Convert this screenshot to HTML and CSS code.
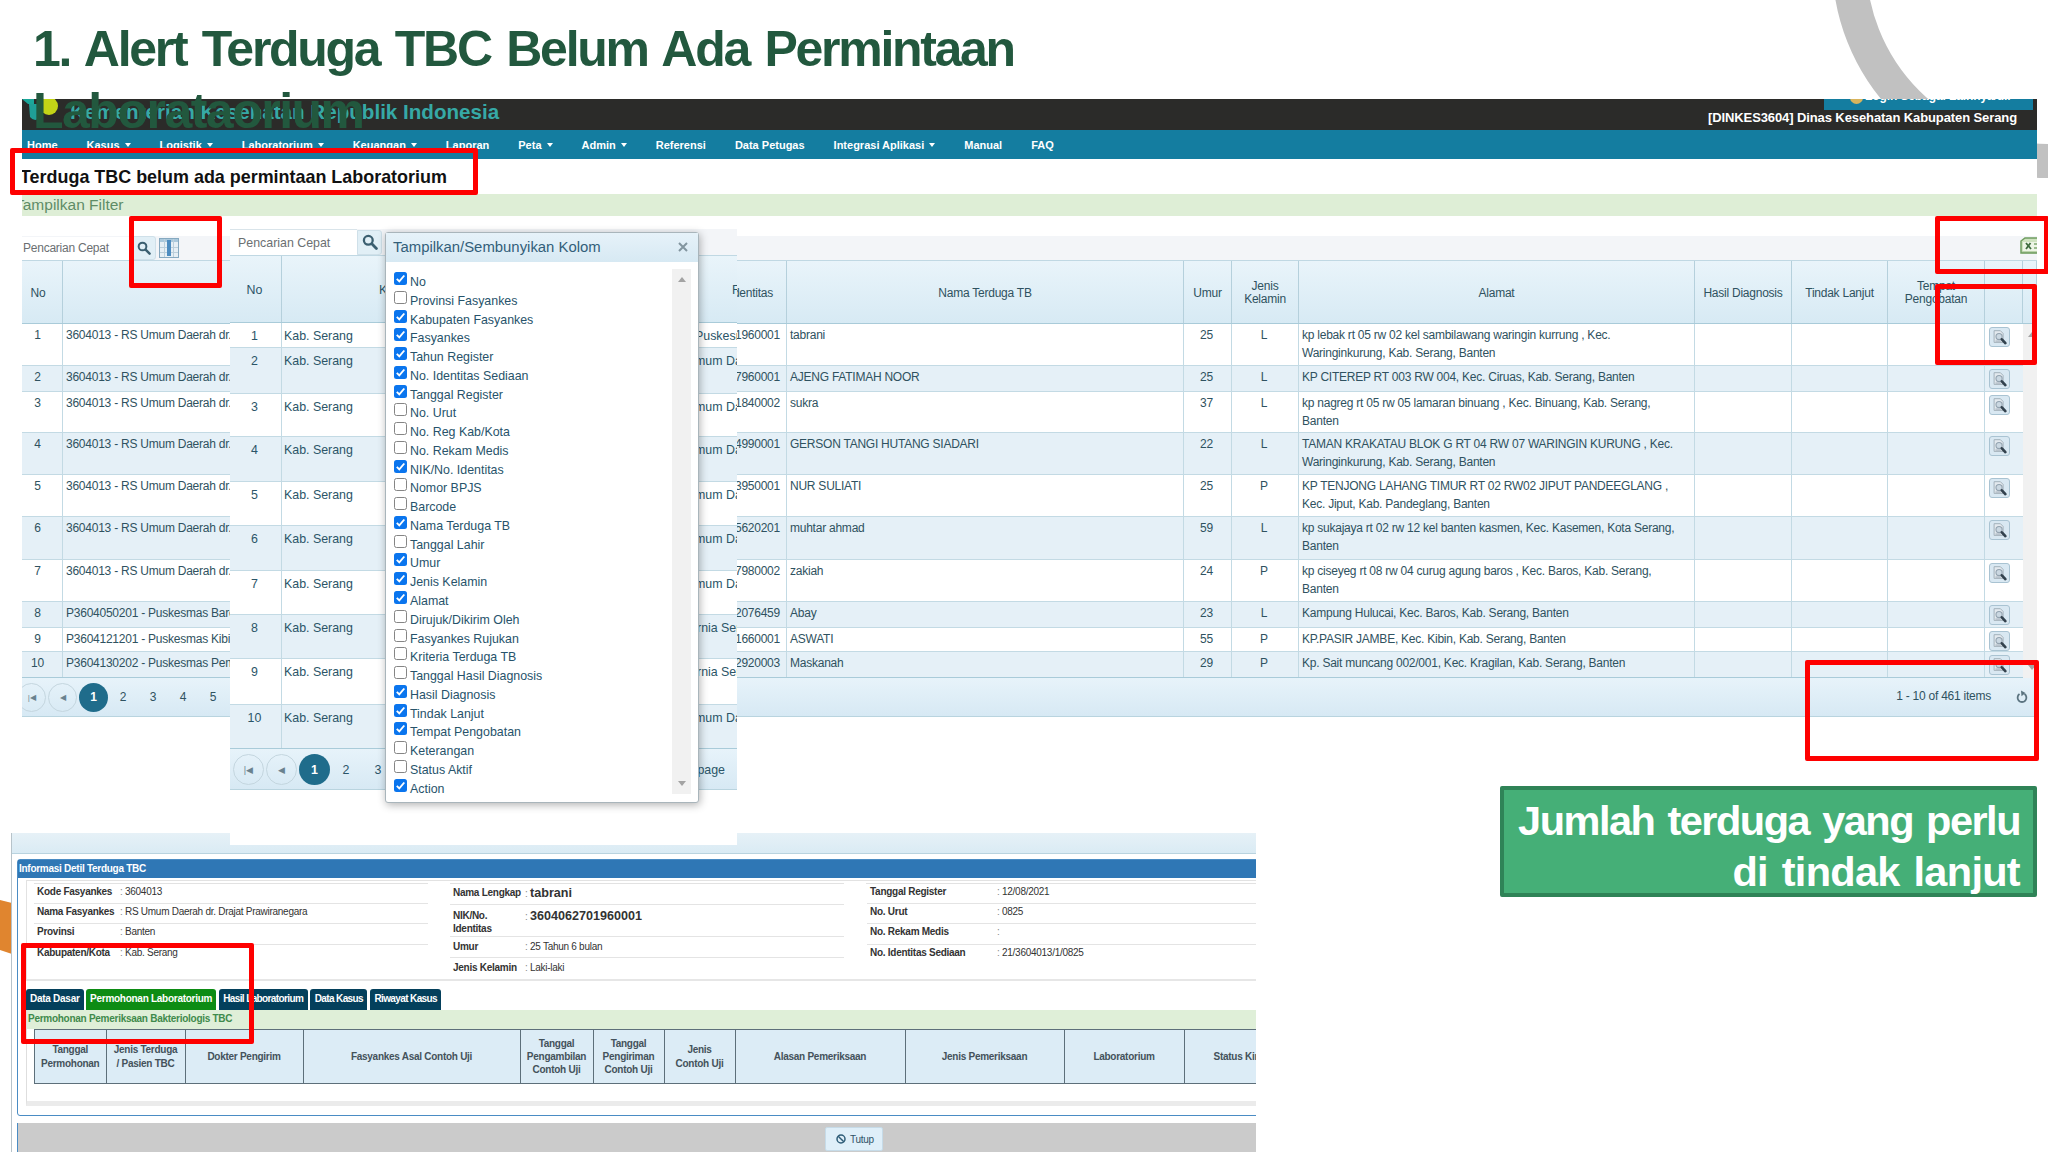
FILE: index.html
```html
<!DOCTYPE html>
<html lang="id">
<head>
  <meta charset="UTF-8" />
  <meta name="viewport" content="width=device-width, initial-scale=1.0"/>
  <title>Alert Terduga TBC</title>
  <link rel="stylesheet" href="styles.css">
</head>
<body>
  <svg width="0" height="0" class="defs">
    <symbol id="search" viewBox="0 0 16 16">
      <circle cx="6.3" cy="6.3" r="4.4" fill="none" stroke="#3b5f70" stroke-width="2.3"/>
      <path d="M9.8 9.8L14.4 14.4" stroke="#3b5f70" stroke-width="2.8" stroke-linecap="round"/>
    </symbol>
    <symbol id="detail" viewBox="0 0 20 20">
      <path d="M4 3h7l3 3v10H4z" fill="#e3e9ee" stroke="#9dabb6"/>
      <circle cx="9.5" cy="9.5" r="3.4" fill="#cbd8e2" stroke="#93a3b0" stroke-width="1.2"/>
      <path d="M12.6 12.6L16.500 16.800" stroke="#33424e" stroke-width="3" stroke-linecap="round"/>
      <path d="M5.5 14.5h6" stroke="#96a5b2"/>
    </symbol>
  </svg>

  <div class="slide">
    <svg class="ring" width="216" height="180" viewBox="1832 0 216 180">
      <circle cx="2047.7" cy="-37.5" r="198.5" fill="none" stroke="#c1c1c1" stroke-width="34"/>
    </svg>
    <svg class="accent" width="12" height="56" viewBox="0 0 12 56">
      <path d="M0 1L12 4V55L0 51Z" fill="#e0852f"/>
    </svg>

    <!-- Main list window -->
    <div class="app">
      <header class="app-header">
        <svg class="app-logo" width="36" height="24" viewBox="0 0 36 24">
          <path d="M0 0h12v5H6z" fill="#1ba79a"/>
          <path d="M7 5h12v13q-6 6-11 0z" fill="#1f9f97"/>
          <circle cx="27" cy="7" r="9" fill="#c3d417"/>
        </svg>
        <span class="app-name">Kementerian Kesehatan Republik Indonesia</span>
        <div class="account">
          <div class="login-as"><i></i>Login Sebagai Lainnya/dll</div>
          <div class="unit">[DINKES3604] Dinas Kesehatan Kabupaten Serang</div>
        </div>
      </header>
      <nav class="navbar">
        <a>Home</a>
        <a class="drop">Kasus</a>
        <a class="drop">Logistik</a>
        <a class="drop">Laboratorium</a>
        <a class="drop">Keuangan</a>
        <a>Laporan</a>
        <a class="drop">Peta</a>
        <a class="drop">Admin</a>
        <a>Referensi</a>
        <a>Data Petugas</a>
        <a class="drop">Integrasi Aplikasi</a>
        <a>Manual</a>
        <a>FAQ</a>
      </nav>
      <h2 class="page-title">Terduga TBC belum ada permintaan Laboratorium</h2>
      <div class="filter-bar">Tampilkan Filter</div>
      <div class="toolbar">
        <span class="quick">Pencarian Cepat</span>
        <span class="tool-btn"><svg width="14" height="14"><use href="#search"/></svg></span>
        <svg class="columns-icon" width="20" height="20" viewBox="0 0 20 20">
          <rect x=".5" y=".5" width="19" height="19" fill="#e6eff5" stroke="#86a9c0"/>
          <rect x="1" y="1" width="18" height="3" fill="#a9c8dc"/>
          <path d="M5.5 1v18M14.5 1v18M1 9.500h18M1 14.500h18" stroke="#bccfdb"/>
          <rect x="8" y="2" width="4" height="16" fill="#4d8cc0"/>
        </svg>
        <svg class="excel-icon" width="18" height="18" viewBox="0 0 18 18">
          <path d="M1 4l4-3h13v15H1z" fill="#cfe3c0" stroke="#6f9d5f" stroke-width="1.5"/>
          <rect x="3" y="5" width="15" height="9" fill="#edf5e6"/>
          <path d="M6 6l5 6M10.500 6L6 12" stroke="#3d6b3d" stroke-width="1.8"/>
          <path d="M14 7h4M14 11h4M2 15.500h16" stroke="#7fa870" stroke-width="1.6"/>
        </svg>
      </div>
      <div class="grid-head main-cols">
        <div class="num">No</div><div></div><div class="ident">NIK/No. Identitas</div><div>Nama Terduga TB</div><div>Umur</div>
        <div>Jenis<br>Kelamin</div><div>Alamat</div><div>Hasil Diagnosis</div><div>Tindak Lanjut</div>
        <div>Tempat<br>Pengobatan</div><div></div><div></div>
      </div>
      <div class="grid-body">
        <div class="rows" id="mainRows"></div>
        <div class="scrollbar"><i class="up"></i><i class="down"></i></div>
      </div>
      <div class="pager">
        <span class="round first">|◀</span><span class="round">◀</span><span class="round current">1</span>
        <span class="page">2</span><span class="page">3</span><span class="page">4</span><span class="page">5</span>
        <span class="total">1 - 10 of 461 items</span>
        <svg class="refresh" width="12" height="14" viewBox="0 0 12 14">
          <path d="M3.500 4A4.400 4.400 0 1 0 8.500 4" fill="none" stroke="#5b7480" stroke-width="1.800"/>
          <path d="M5 0.500L9.500 3L5.500 6.300z" fill="#5b7480"/>
        </svg>
      </div>
    </div>

    <!-- Detail window -->
    <div class="detail">
      <div class="detail-strip"></div>
      <div class="panel">
        <div class="panel-title">Informasi Detil Terduga TBC</div>
        <div class="info">
          <dl>
            <div><dt>Kode Fasyankes</dt><dd>3604013</dd></div>
            <div><dt>Nama Fasyankes</dt><dd>RS Umum Daerah dr. Drajat Prawiranegara</dd></div>
            <div><dt>Provinsi</dt><dd>Banten</dd></div>
            <div><dt>Kabupaten/Kota</dt><dd>Kab. Serang</dd></div>
          </dl>
          <dl class="person">
            <div><dt>Nama Lengkap</dt><dd><b>tabrani</b></dd></div>
            <div class="two"><dt>NIK/No.<br>Identitas</dt><dd><b>3604062701960001</b></dd></div>
            <div><dt>Umur</dt><dd>25 Tahun 6 bulan</dd></div>
            <div><dt>Jenis Kelamin</dt><dd>Laki-laki</dd></div>
          </dl>
          <dl class="register">
            <div><dt>Tanggal Register</dt><dd>12/08/2021</dd></div>
            <div><dt>No. Urut</dt><dd>0825</dd></div>
            <div><dt>No. Rekam Medis</dt><dd></dd></div>
            <div><dt>No. Identitas Sediaan</dt><dd>21/3604013/1/0825</dd></div>
          </dl>
        </div>
        <div class="tabs">
          <span>Data Dasar</span><span class="active">Permohonan Laboratorium</span><span>Hasil Laboratorium</span><span>Data Kasus</span><span>Riwayat Kasus</span>
        </div>
        <div class="tab-body">
          <div class="tab-title">Permohonan Pemeriksaan Bakteriologis TBC</div>
          <div class="lab-head">
            <div>Tanggal<br>Permohonan</div><div>Jenis Terduga<br>/ Pasien TBC</div><div>Dokter Pengirim</div>
            <div>Fasyankes Asal Contoh Uji</div><div>Tanggal<br>Pengambilan<br>Contoh Uji</div>
            <div>Tanggal<br>Pengiriman<br>Contoh Uji</div><div>Jenis<br>Contoh Uji</div><div>Alasan Pemeriksaan</div>
            <div>Jenis Pemeriksaan</div><div>Laboratorium</div><div class="status">Status Kirim</div>
          </div>
        </div>
      </div>
      <div class="detail-footer">
        <span class="close-btn">
          <svg width="10" height="10" viewBox="0 0 10 10"><circle cx="5" cy="5" r="4" fill="none" stroke="#2f5d78" stroke-width="1.500"/><path d="M2.200 2.200l5.600 5.600" stroke="#2f5d78" stroke-width="1.500"/></svg>
          Tutup
        </span>
      </div>
    </div>

    <!-- Second list, with the column chooser open -->
    <div class="app-copy">
      <div class="toolbar">
        <span class="quick">Pencarian Cepat</span>
        <span class="tool-btn"><svg width="16" height="16"><use href="#search"/></svg></span>
      </div>
      <div class="grid-head copy-cols"><div class="num">No</div><div class="kab">Kabupaten</div><div class="fas">Fasyankes</div></div>
      <div id="copyRows"></div>
      <div class="pager">
        <span class="round">|◀</span><span class="round">◀</span><span class="round current">1</span>
        <span class="page">2</span><span class="page">3</span>
        <span class="per-page">page</span>
      </div>
    </div>

    <div class="chooser">
      <div class="chooser-title">Tampilkan/Sembunyikan Kolom
        <svg width="10" height="10" viewBox="0 0 10 10"><path d="M1 1l8 8M9 1L1 9" stroke="#82959f" stroke-width="2"/></svg>
      </div>
      <div class="chooser-body">
        <ul id="columnList"></ul>
        <div class="scrollbar"><i class="up"></i><i class="down"></i></div>
      </div>
    </div>

    <div class="callout">Jumlah terduga yang perlu<br><span>di tindak lanjut</span></div>

    <h1 class="slide-title">1. Alert Terduga TBC Belum Ada Permintaan<br><span>Laborataorium</span></h1>

    <div class="mark mark-title"></div>
    <div class="mark mark-columns"></div>
    <div class="mark mark-excel"></div>
    <div class="mark mark-action"></div>
    <div class="mark mark-total"></div>
    <div class="mark mark-tabs"></div>
  </div>

  <script src="script.js"></script>
</body>
</html>
```
FILE: styles.css
```css
* {
  box-sizing: border-box;
  margin: 0;
  padding: 0;
}
body {
  font-family: "Liberation Sans", Arial, sans-serif;
  background: #fff;
  color: #2f5260;
}
.defs {
  position: absolute;
}
.slide {
  position: relative;
  width: 2048px;
  height: 1152px;
  overflow: hidden;
}
.ring {
  position: absolute;
  right: 0;
  top: 0;
}
.accent {
  position: absolute;
  left: 0;
  top: 899px;
}
.slide-title {
  position: absolute;
  left: 33px;
  top: 18px;
  font-size: 50px;
  line-height: 62px;
  letter-spacing: -2.3px;
  word-spacing: 4px;
  color: #22583e;
  white-space: nowrap;
}
.slide-title span {
  letter-spacing: -1.5px;
}

/* main window */
.app {
  position: absolute;
  left: 22px;
  top: 99px;
  width: 2015px;
  height: 619px;
  overflow: hidden;
  background: #fff;
  font-size: 12px;
  letter-spacing: -0.24px;
}
.app-header {
  display: flex;
  height: 31px;
  background: #2b2b29;
  overflow: hidden;
}
.app-logo {
  margin-right: 12px;
}
.app-name {
  font-size: 20.6px;
  font-weight: bold;
  line-height: 25px;
  letter-spacing: 0;
  color: #36a9a6;
  white-space: nowrap;
}
.account {
  margin-left: auto;
  width: 330px;
  display: flex;
  flex-direction: column;
  align-items: flex-end;
  color: #fff;
  font-weight: bold;
  letter-spacing: -0.1px;
  white-space: nowrap;
}
.login-as {
  display: flex;
  align-items: flex-end;
  width: 209px;
  height: 11px;
  margin-right: 4px;
  padding: 0 24px 7px 26px;
  background: #147da0;
  font-size: 12px;
  line-height: 14px;
  overflow: hidden;
}
.login-as i {
  flex: none;
  width: 13px;
  height: 13px;
  margin: 0 2px -1px 0;
  border-radius: 50%;
  background: #d9b45c;
}
.unit {
  margin: 0 20px 0 0;
  font-size: 13px;
  line-height: 16px;
}
.navbar {
  display: flex;
  align-items: center;
  gap: 29px;
  height: 29px;
  padding: 1px 0 0 5px;
  background: #147da0;
  color: #fff;
  font-size: 11px;
  font-weight: bold;
  letter-spacing: 0;
  white-space: nowrap;
}
.drop::after {
  content: "";
  display: inline-block;
  margin-left: 5px;
  vertical-align: 2px;
  border: 3.5px solid transparent;
  border-top: 4px solid #fff;
  border-bottom: 0;
}
.page-title {
  height: 35px;
  margin-left: -2px;
  font-size: 17.93px;
  line-height: 36px;
  letter-spacing: 0;
  color: #111;
}
.filter-bar {
  height: 22px;
  margin-bottom: 20px;
  background: #deeed6;
  color: #5e8c66;
  font-size: 15.5px;
  letter-spacing: 0;
  line-height: 21px;
  text-indent: -7px;
}
.toolbar {
  display: flex;
  align-items: center;
  height: 24px;
  background: #f3f5f8;
}
.quick {
  width: 109px;
  height: 23px;
  padding-left: 1px;
  background: #fff;
  color: #6b6f72;
  line-height: 23px;
}
.tool-btn {
  display: flex;
  align-items: center;
  justify-content: center;
  width: 25px;
  height: 24px;
  border: 1px solid #cfe0e9;
  border-radius: 0 3px 3px 0;
  background: #e1eff6;
}
.columns-icon {
  margin-left: 3px;
}
.excel-icon {
  margin: -5px -1px 0 auto;
}

.grid-head {
  display: grid;
  height: 64px;
  border-top: 1px solid #c0d8e3;
  border-bottom: 1px solid #a9cbd9;
  background: linear-gradient(#e9f4fa, #d7eaf4);
  text-align: center;
  line-height: 13px;
}
.grid-head div {
  display: flex;
  align-items: center;
  justify-content: center;
  padding-top: 2px;
  border-right: 1px solid #b5d0dc;
  white-space: nowrap;
}
.main-cols {
  grid-template-columns: 41px 524px 200px 397px 48px 67px 396px 97px 96px 97px 38px 14px;
}
.main-cols .num {
  padding-right: 8px;
}
.main-cols .ident {
  justify-content: flex-end;
  padding-right: 13px;
}
.grid-body {
  display: flex;
  height: 354px;
}
.row {
  display: grid;
  border-bottom: 1px solid #c3dae4;
  line-height: 18.3px;
  background: #fff;
}
.row.alt {
  background: #e5f0f7;
}
.row div {
  padding: 2px 2px 0 3px;
  border-right: 1px solid #c3dae4;
  overflow: hidden;
  white-space: nowrap;
}
.row .c {
  padding-left: 0;
  text-align: center;
}
.row.main-cols .num {
  padding-right: 9px;
}
.row .r {
  padding-right: 6px;
  text-align: right;
}
.row:last-child {
  border-bottom-color: #a9cbd9;
}
.rows .row div:last-child {
  padding: 3px 0 0 4px;
  border-right: 0;
}
.action {
  display: block;
  width: 21px;
  height: 20px;
  border: 1px solid #a9c3d2;
  border-radius: 3px;
  background: #d9e8f2;
}
.scrollbar {
  display: flex;
  flex-direction: column;
  justify-content: space-between;
  align-items: center;
  padding: 8px 0;
  background: #f1f1f1;
}
.rows {
  width: 2001px;
}
.grid-body .scrollbar {
  width: 14px;
  padding-left: 4px;
}
.up, .down {
  border: 4px solid transparent;
}
.up {
  border-top: 0;
  border-bottom: 5px solid #a3a3a3;
}
.down {
  border-bottom: 0;
  border-top: 5px solid #a3a3a3;
}
.pager {
  display: flex;
  align-items: center;
  height: 39px;
  padding-right: 9px;
  border-bottom: 1px solid #b9d4df;
  background: linear-gradient(#e7f3fa, #d7e9f4);
}
.round {
  display: flex;
  align-items: center;
  justify-content: center;
  flex: none;
  width: 29px;
  height: 29px;
  margin-right: 2px;
  border: 1px solid #c4d6df;
  border-radius: 50%;
  color: #6a828f;
  font-size: 8px;
}
.round.first {
  margin-left: -5px;
}
.round.current {
  margin-right: 0;
  border: 0;
  background: #1f6c8b;
  color: #fff;
  font-size: 12px;
  font-weight: bold;
}
.page {
  width: 30px;
  text-align: center;
}
.total {
  margin: -2px 25px 0 auto;
}

/* second list */
.app-copy {
  position: absolute;
  left: 230px;
  top: 229px;
  width: 507px;
  height: 616px;
  overflow: hidden;
  background: #fff;
  font-size: 12.4px;
  color: #2b5568;
}
.app-copy .toolbar {
  height: 26px;
}
.app-copy .quick {
  width: 127px;
  height: 26px;
  padding-left: 8px;
  line-height: 26px;
  border-top: 1px solid #d9e4ea;
}
.app-copy .tool-btn {
  height: 25px;
}
.app-copy .grid-head {
  height: 68px;
}
.copy-cols {
  grid-template-columns: 52px 414px 41px;
}
.copy-cols div {
  overflow: hidden;
}
.copy-cols .num {
  padding-right: 2px;
}
.app-copy .kab {
  justify-content: flex-start;
  padding-left: 97px;
}
.app-copy .fas {
  justify-content: flex-start;
  padding-left: 36px;
}
.app-copy .row div {
  padding-top: 3.6px;
}
.app-copy .row .kab-cell {
  padding-left: 2px;
  border-right: 0;
}
.app-copy .row .cut {
  padding-left: 0;
  text-indent: 1px;
}
.app-copy .row .puskes {
  text-indent: -1px;
}
.app-copy .row div:last-child,
.app-copy .grid-head div:last-child,
.app-copy .grid-head .kab {
  border-right: 0;
}
.app-copy .pager {
  height: 41px;
  padding: 1px 12px 0 3px;
}
.app-copy .round {
  width: 31px;
  height: 31px;
  font-size: 9px;
}
.app-copy .round.current {
  font-size: 12.4px;
}
.app-copy .page {
  width: 32px;
}
.per-page {
  margin-left: auto;
}

/* column chooser */
.chooser {
  position: absolute;
  left: 385px;
  top: 232px;
  width: 314px;
  height: 571px;
  border: 1px solid #a9b5bb;
  border-radius: 3px;
  background: #fff;
  box-shadow: 1px 2px 8px rgba(0,0,0,0.3);
  color: #27536b;
}
.chooser-title {
  display: flex;
  align-items: center;
  justify-content: space-between;
  height: 29px;
  padding: 0 10px 2px 7px;
  background: linear-gradient(#e6f2f9, #d7e9f3);
  color: #335f7a;
  font-size: 14.9px;
}
.chooser-body {
  display: flex;
  justify-content: space-between;
  height: 540px;
  padding: 7px 7px 8px 8px;
}
.chooser ul {
  list-style: none;
  padding-top: 3px;
}
.chooser li {
  display: flex;
  gap: 3px;
  height: 18.77px;
  font-size: 12.4px;
  line-height: 20px;
  white-space: nowrap;
}
.box {
  width: 13px;
  height: 13px;
  border: 1.3px solid #858585;
  border-radius: 2.500px;
  background: #fff;
}
.box.on {
  border: 0;
  background: #0a75ee;
}
.box svg {
  display: block;
}
.chooser .scrollbar {
  width: 19px;
}

/* detail window */
.detail {
  position: absolute;
  left: 11px;
  top: 833px;
  width: 1245px;
  height: 319px;
  overflow: hidden;
  border-left: 1px solid #b7c3ca;
  background: #fff;
  color: #333;
  font-size: 10px;
  letter-spacing: -0.27px;
}
.detail-strip {
  height: 21px;
  border-bottom: 1px solid #b9d3df;
  background: linear-gradient(#e6f1f7, #daebf4);
}
.panel {
  width: 1260px;
  height: 257px;
  margin: 5px 0 0 5px;
  border: 1px solid #4a8cc4;
  border-radius: 3px 0 0 3px;
}
.panel-title {
  height: 18px;
  padding-left: 1px;
  background: #2f77b5;
  color: #fff;
  font-weight: bold;
  line-height: 17px;
}
.info {
  display: flex;
  gap: 22px;
  height: 101px;
  margin: 2px 0 0 8px;
  padding: 2px 0 0 7px;
  border: 1px solid #e2e2e2;
  border-bottom: 2px solid #e6e6e6;
}
.info dl {
  width: 394px;
  border-top: 1px solid #e2e2e2;
}
.info dl div {
  display: flex;
  height: 20.2px;
  padding: 1px 0 0 3px;
  border-bottom: 1px solid #e4e4e4;
  line-height: 13px;
}
.info dl div:last-child {
  border-bottom: 0;
}
.info dt {
  width: 83px;
  font-weight: bold;
}
.info dd::before {
  content: ":";
  display: inline-block;
  width: 5px;
  color: #888;
}
.info .person dt {
  width: 72px;
}
.info .person div {
  height: 21px;
  padding-top: 3px;
}
.info .person div:first-child {
  padding-top: 2px;
}
.info .person .two {
  height: 31.5px;
  padding-top: 4px;
}
.info b {
  font-size: 12.6px;
  line-height: 14px;
  letter-spacing: 0;
}
.info .register dt {
  width: 127px;
}
.info .register {
  padding-left: 1px;
}
.tabs {
  display: flex;
  gap: 2.500px;
  height: 21px;
  margin: 8px 0 0 8px;
}
.tabs span {
  padding: 0 4px;
  border-radius: 3px 3px 0 0;
  background: #04405c;
  color: #fff;
  font-weight: bold;
  line-height: 20px;
}
.tabs span:nth-child(n+3) {
  padding: 0 4.5px;
  letter-spacing: -0.62px;
}
.tabs .active {
  background: #0d8c14;
}
.tab-body {
  height: 96px;
  margin-left: 8px;
  border-left: 1px solid #dedede;
  border-bottom: 5px solid #ebebeb;
}
.tab-title {
  height: 19px;
  padding-left: 1px;
  background: #dfefd8;
  color: #3f8a4c;
  font-weight: bold;
  line-height: 18px;
}
.lab-head {
  display: grid;
  grid-template-columns: 71.500px 79px 118px 217px 73px 71px 71px 170px 159px 120px 120px;
  height: 55px;
  margin-left: 7px;
  border: 1px solid #5d6f7a;
  background: #dcecf6;
  font-weight: bold;
  text-align: center;
  line-height: 13.2px;
  color: #44525b;
}
.lab-head div {
  display: flex;
  align-items: center;
  justify-content: center;
  border-right: 1px solid #5d6f7a;
  white-space: nowrap;
}
.lab-head .status {
  justify-content: flex-start;
  padding-left: 29px;
}
.detail-footer {
  display: flex;
  height: 29px;
  margin: 7px 0 0 5px;
  padding: 4px 0 0 807px;
  border-left: 1px solid #4a8cc4;
  background: #cbcbcb;
}
.close-btn {
  display: flex;
  align-items: center;
  gap: 4px;
  width: 58px;
  height: 24px;
  padding-left: 10px;
  border: 1px solid #c6dbe8;
  border-radius: 2px;
  background: #dfeff9;
  color: #2f5266;
}

.callout {
  position: absolute;
  left: 1500px;
  top: 786px;
  width: 537px;
  height: 111px;
  padding: 5px 13px 0 0;
  border: 4px solid #2f8357;
  border-radius: 2px;
  background: #45af77;
  color: #fff;
  font-size: 41.500px;
  font-weight: bold;
  letter-spacing: -1.5px;
  word-spacing: 3px;
  line-height: 51px;
  text-align: right;
  white-space: nowrap;
}
.callout span {
  letter-spacing: -0.7px;
}

/* red highlights */
.mark {
  position: absolute;
  border: 5px solid #fe0000;
  border-radius: 2px;
}
.mark-title {
  left: 10px;
  top: 148px;
  width: 468px;
  height: 47px;
}
.mark-columns {
  left: 129px;
  top: 216px;
  width: 93px;
  height: 72px;
}
.mark-excel {
  left: 1935px;
  top: 216px;
  width: 114px;
  height: 58px;
}
.mark-action {
  left: 1935px;
  top: 284px;
  width: 102px;
  height: 81px;
}
.mark-total {
  left: 1805px;
  top: 660px;
  width: 234px;
  height: 101px;
}
.mark-tabs {
  left: 21px;
  top: 943px;
  width: 233px;
  height: 101px;
}
```
FILE: script.js
```js
const rs = "3604013 - RS Umum Daerah dr. Drajat";

const patients = [
  { h: 42, fas: rs, id: "1960001", name: "tabrani", age: 25, sex: "L", addr: "kp lebak rt 05 rw 02 kel sambilawang waringin kurrung , Kec.<br>Waringinkurung, Kab. Serang, Banten" },
  { h: 26, fas: rs, id: "7960001", name: "AJENG FATIMAH NOOR", age: 25, sex: "L", addr: "KP CITEREP RT 003 RW 004, Kec. Ciruas, Kab. Serang, Banten" },
  { h: 41, fas: rs, id: "1840002", name: "sukra", age: 37, sex: "L", addr: "kp nagreg rt 05 rw 05 lamaran binuang , Kec. Binuang, Kab. Serang,<br>Banten" },
  { h: 42, fas: rs, id: "4990001", name: "GERSON TANGI HUTANG SIADARI", age: 22, sex: "L", addr: "TAMAN KRAKATAU BLOK G RT 04 RW 07 WARINGIN KURUNG , Kec.<br>Waringinkurung, Kab. Serang, Banten" },
  { h: 42, fas: rs, id: "3950001", name: "NUR SULIATI", age: 25, sex: "P", addr: "KP TENJONG LAHANG TIMUR RT 02 RW02 JIPUT PANDEEGLANG ,<br>Kec. Jiput, Kab. Pandeglang, Banten" },
  { h: 43, fas: rs, id: "5620201", name: "muhtar ahmad", age: 59, sex: "L", addr: "kp sukajaya rt 02 rw 12 kel banten kasmen, Kec. Kasemen, Kota Serang,<br>Banten" },
  { h: 42, fas: rs, id: "7980002", name: "zakiah", age: 24, sex: "P", addr: "kp ciseyeg rt 08 rw 04 curug agung baros , Kec. Baros, Kab. Serang,<br>Banten" },
  { h: 26, fas: "P3604050201 - Puskesmas Baros", id: "2076459", name: "Abay", age: 23, sex: "L", addr: "Kampung Hulucai, Kec. Baros, Kab. Serang, Banten" },
  { h: 24, fas: "P3604121201 - Puskesmas Kibin", id: "1660001", name: "ASWATI", age: 55, sex: "P", addr: "KP.PASIR JAMBE, Kec. Kibin, Kab. Serang, Banten" },
  { h: 26, fas: "P3604130202 - Puskesmas Pematang", id: "2920003", name: "Maskanah", age: 29, sex: "P", addr: "Kp. Sait muncang 002/001, Kec. Kragilan, Kab. Serang, Banten" }
];

document.getElementById("mainRows").innerHTML = patients.map((p, i) => `
  <div class="row main-cols ${i % 2 ? "alt" : ""}" style="height:${p.h}px">
    <div class="c num">${i + 1}</div><div>${p.fas}</div><div class="r">${p.id}</div><div>${p.name}</div>
    <div class="c">${p.age}</div><div class="c">${p.sex}</div><div>${p.addr}</div>
    <div></div><div></div><div></div>
    <div><span class="action"><svg width="19" height="18"><use href="#detail"/></svg></span></div>
  </div>`).join("");

const copies = [
  [25, "Puskesmas"], [46, "mum Daerah"], [43, "mum Daerah"], [45, "mum Daerah"], [44, "mum Daerah"],
  [45, "mum Daerah"], [44, "mum Daerah"], [44, "rnia Serang"], [46, "rnia Serang"], [44, "mum Daerah"]
];

document.getElementById("copyRows").innerHTML = copies.map(([h, fas], i) => `
  <div class="row copy-cols ${i % 2 ? "alt" : ""}" style="height:${h}px">
    <div class="c num">${i + 1}</div><div class="kab-cell">Kab. Serang</div>
    <div class="cut ${fas[0] === "r" ? "" : "puskes"}">${fas}</div>
  </div>`).join("");

// 1 = column is shown
const columns = [
  ["No", 1], ["Provinsi Fasyankes", 0], ["Kabupaten Fasyankes", 1], ["Fasyankes", 1],
  ["Tahun Register", 1], ["No. Identitas Sediaan", 1], ["Tanggal Register", 1], ["No. Urut", 0],
  ["No. Reg Kab/Kota", 0], ["No. Rekam Medis", 0], ["NIK/No. Identitas", 1], ["Nomor BPJS", 0],
  ["Barcode", 0], ["Nama Terduga TB", 1], ["Tanggal Lahir", 0], ["Umur", 1], ["Jenis Kelamin", 1],
  ["Alamat", 1], ["Dirujuk/Dikirim Oleh", 0], ["Fasyankes Rujukan", 0], ["Kriteria Terduga TB", 0],
  ["Tanggal Hasil Diagnosis", 0], ["Hasil Diagnosis", 1], ["Tindak Lanjut", 1],
  ["Tempat Pengobatan", 1], ["Keterangan", 0], ["Status Aktif", 0], ["Action", 1]
];

const tick = '<svg width="13" height="13" viewBox="0 0 13 13"><path d="M2.8 6.8L5.3 9.300L10.300 3.500" fill="none" stroke="#fff" stroke-width="1.900"/></svg>';

document.getElementById("columnList").innerHTML = columns.map(([label, on]) =>
  `<li><span class="box ${on ? "on" : ""}">${on ? tick : ""}</span>${label}</li>`).join("");
```
